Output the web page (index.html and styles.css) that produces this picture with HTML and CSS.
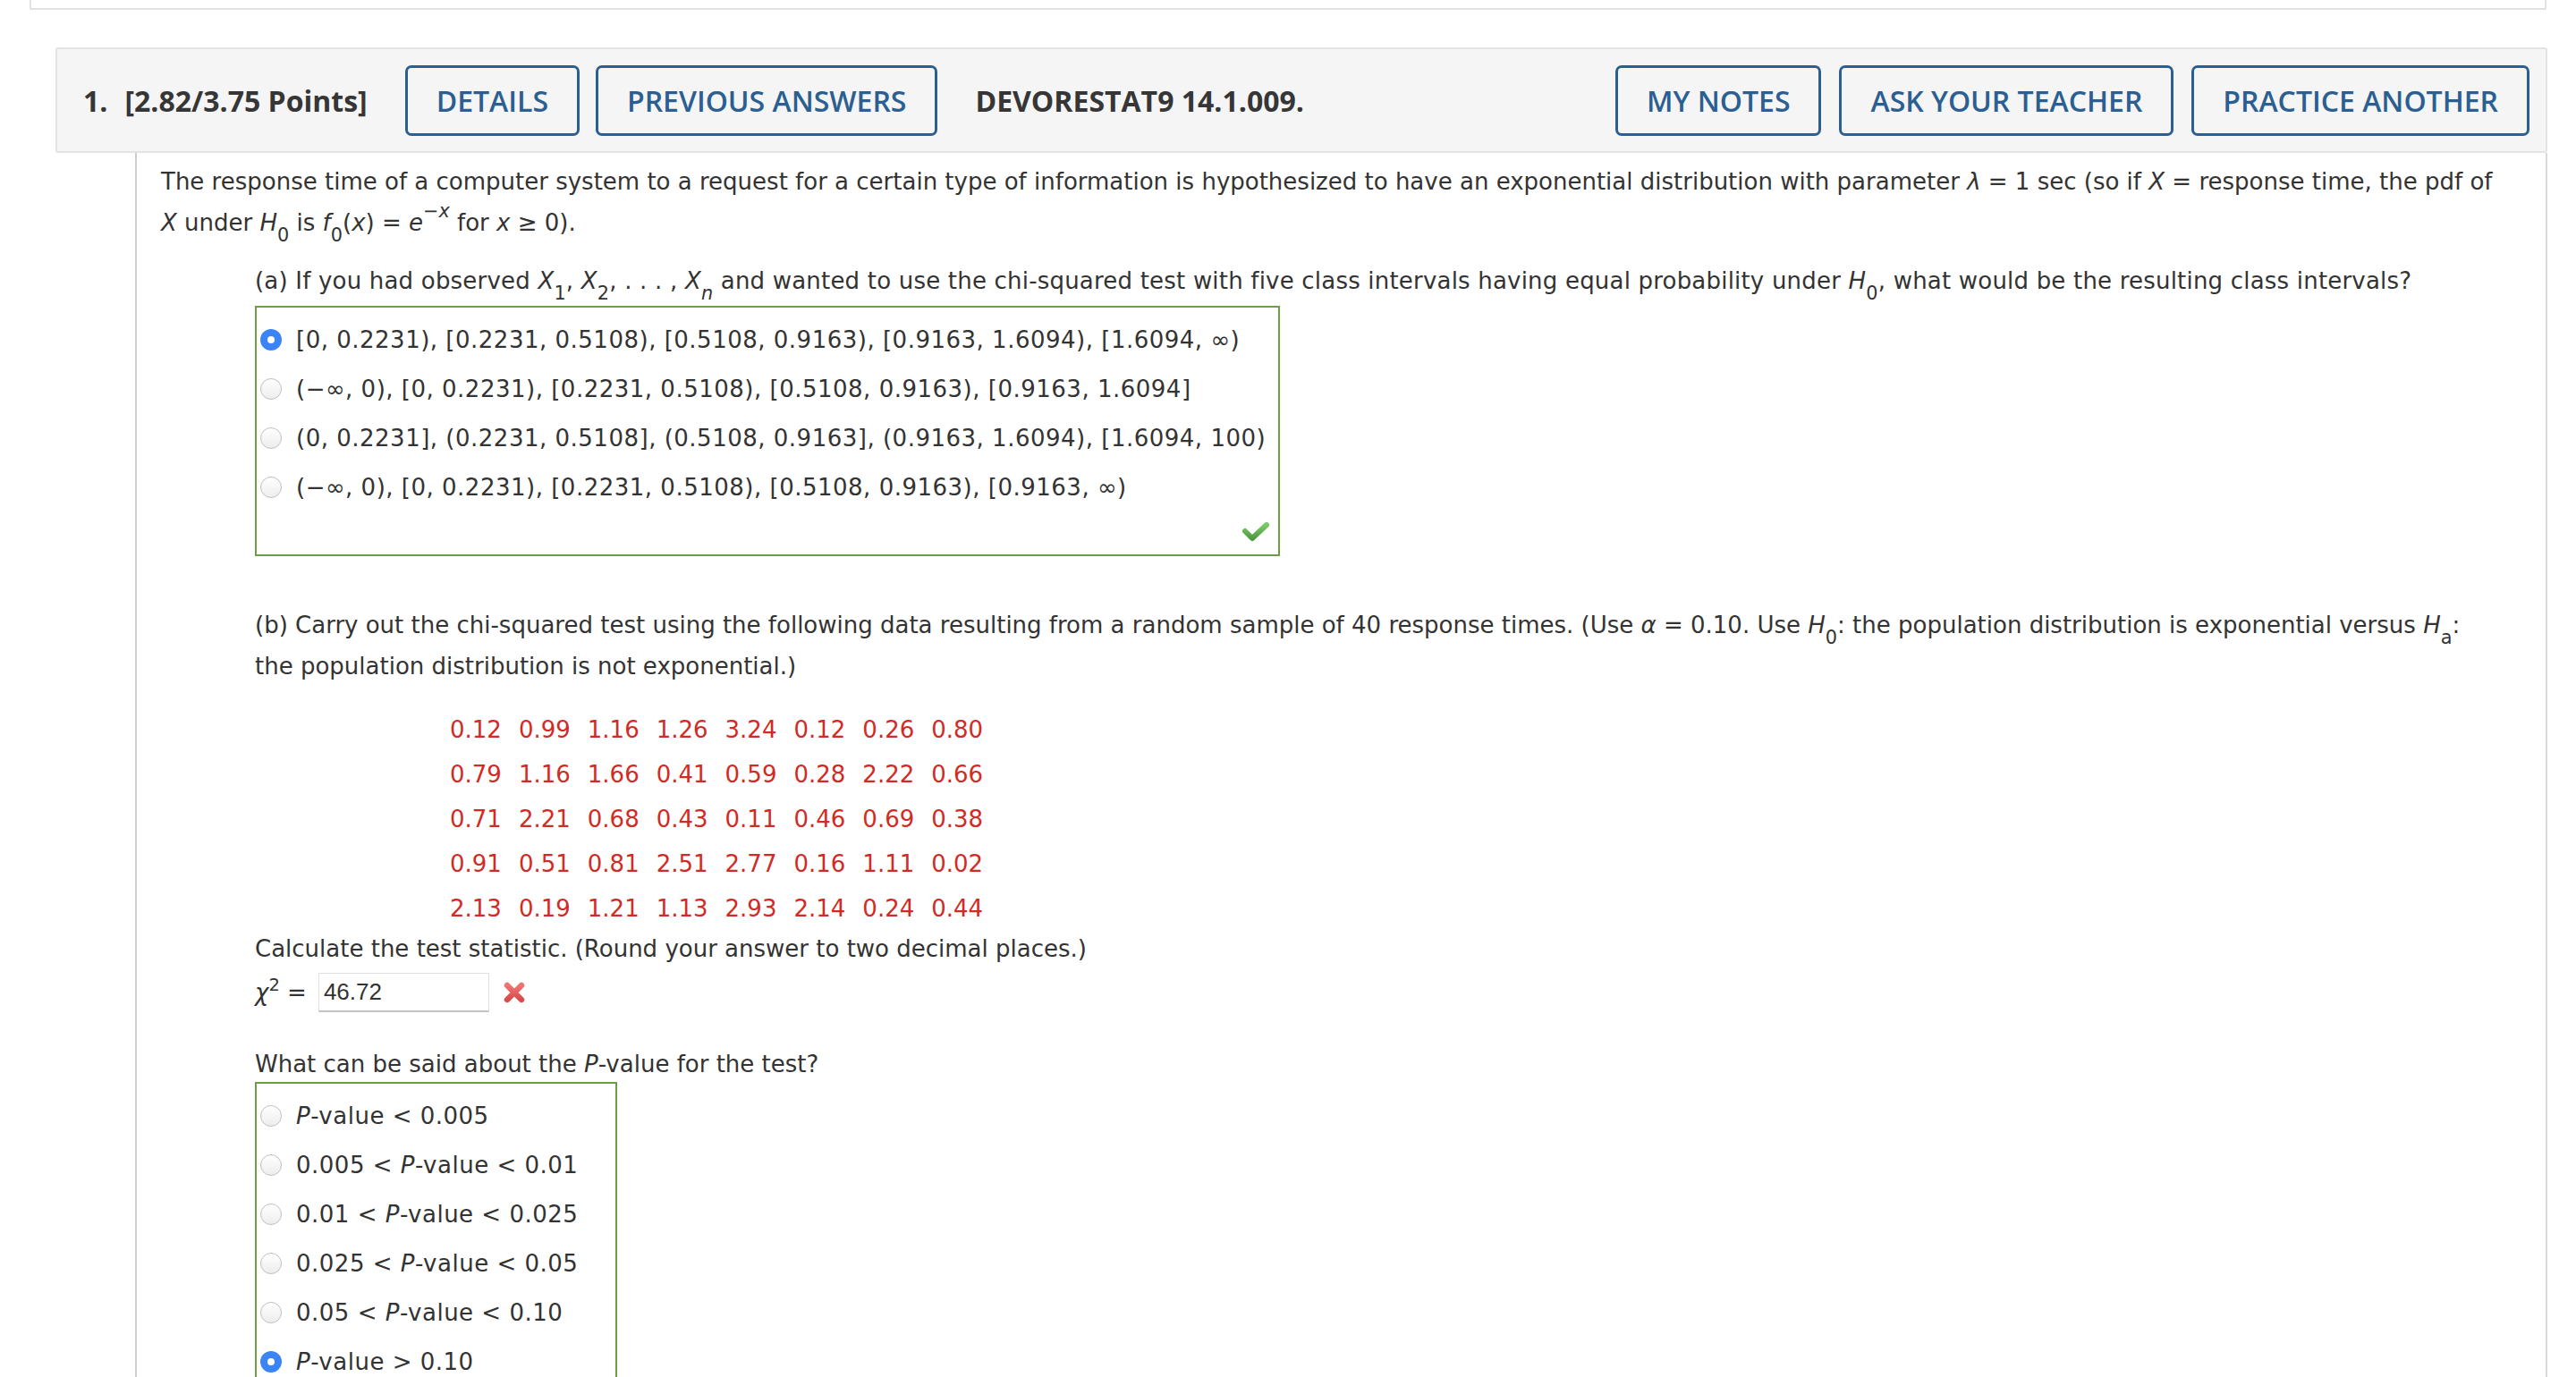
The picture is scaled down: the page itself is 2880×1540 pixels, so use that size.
FILE: index.html
```html
<!DOCTYPE html>
<html lang="en">
<head>
    <meta charset="UTF-8">
    <title>DEVORESTAT9 14.1.009</title>
    <link rel="stylesheet" href="styles.css">
</head>
<body>
    <div class="top-panel"></div>

    <div class="question">
        <div class="q-header">
            <span class="q-num">1.</span>
            <span class="q-points">[2.82/3.75 Points]</span>
            <div class="q-actions q-actions-left">
                <button class="btn">DETAILS</button>
                <button class="btn">PREVIOUS ANSWERS</button>
            </div>
            <span class="q-code">DEVORESTAT9 14.1.009.</span>
            <div class="q-actions q-actions-right">
                <button class="btn">MY NOTES</button>
                <button class="btn">ASK YOUR TEACHER</button>
                <button class="btn">PRACTICE ANOTHER</button>
            </div>
        </div>

        <div class="q-body">
            <p class="intro">
                The response time of a computer system to a request for a certain type of information is hypothesized to have an exponential distribution with parameter <i>λ</i> = 1 sec (so if <i>X</i> = response time, the pdf of <i>X</i> under <i>H</i><span class="sub">0</span> is <i>f</i><span class="sub">0</span>(<i>x</i>) = <i>e</i><span class="sup">−<i>x</i></span> for <i>x</i> ≥ 0).
            </p>

            <div class="part">
                <p class="prompt prompt-a">(a) If you had observed <i>X</i><span class="sub">1</span>, <i>X</i><span class="sub">2</span>, . . . , <i>X</i><span class="sub"><i>n</i></span> and wanted to use the chi-squared test with five class intervals having equal probability under <i>H</i><span class="sub">0</span>, what would be the resulting class intervals?</p>

                <div class="choices choices-a">
                    <div class="choice"><span class="radio checked"></span><span>[0, 0.2231), [0.2231, 0.5108), [0.5108, 0.9163), [0.9163, 1.6094), [1.6094, ∞)</span></div>
                    <div class="choice"><span class="radio"></span><span>(−∞, 0), [0, 0.2231), [0.2231, 0.5108), [0.5108, 0.9163), [0.9163, 1.6094]</span></div>
                    <div class="choice"><span class="radio"></span><span>(0, 0.2231], (0.2231, 0.5108], (0.5108, 0.9163], (0.9163, 1.6094), [1.6094, 100)</span></div>
                    <div class="choice"><span class="radio"></span><span>(−∞, 0), [0, 0.2231), [0.2231, 0.5108), [0.5108, 0.9163), [0.9163, ∞)</span></div>
                    <div class="feedback">
                        <svg class="icon-check" width="30" height="24" viewBox="0 0 30 24">
                            <defs>
                                <linearGradient id="checkGrad" x1="0" y1="0" x2="0" y2="1">
                                    <stop offset="0" stop-color="#7ccb6a"/>
                                    <stop offset="1" stop-color="#4f9a40"/>
                                </linearGradient>
                            </defs>
                            <path d="M3 11 L11 19 L27 4" fill="none" stroke="url(#checkGrad)" stroke-width="6" stroke-linecap="round" stroke-linejoin="round"/>
                        </svg>
                    </div>
                </div>
            </div>

            <div class="part part-b">
                <p class="prompt prompt-b">(b) Carry out the chi-squared test using the following data resulting from a random sample of 40 response times. (Use <i>α</i> = 0.10. Use <i>H</i><span class="sub">0</span>: the population distribution is exponential versus <i>H</i><span class="sub">a</span>: the population distribution is not exponential.)</p>

                <table class="data-table">
                    <tr><td>0.12</td><td>0.99</td><td>1.16</td><td>1.26</td><td>3.24</td><td>0.12</td><td>0.26</td><td>0.80</td></tr>
                    <tr><td>0.79</td><td>1.16</td><td>1.66</td><td>0.41</td><td>0.59</td><td>0.28</td><td>2.22</td><td>0.66</td></tr>
                    <tr><td>0.71</td><td>2.21</td><td>0.68</td><td>0.43</td><td>0.11</td><td>0.46</td><td>0.69</td><td>0.38</td></tr>
                    <tr><td>0.91</td><td>0.51</td><td>0.81</td><td>2.51</td><td>2.77</td><td>0.16</td><td>1.11</td><td>0.02</td></tr>
                    <tr><td>2.13</td><td>0.19</td><td>1.21</td><td>1.13</td><td>2.93</td><td>2.14</td><td>0.24</td><td>0.44</td></tr>
                </table>

                <p class="prompt">Calculate the test statistic. (Round your answer to two decimal places.)</p>
                <div class="answer-row">
                    <span class="answer-label"><i>χ</i><span class="sup-small">2</span> = </span>
                    <input class="answer-input" type="text" value="46.72">
                    <svg class="icon-wrong" width="26" height="24" viewBox="0 0 26 24">
                        <defs>
                            <linearGradient id="wrongGrad" x1="0" y1="0" x2="0" y2="1">
                                <stop offset="0" stop-color="#f07373"/>
                                <stop offset="1" stop-color="#d94a4a"/>
                            </linearGradient>
                        </defs>
                        <path d="M5 4 L21 20 M21 4 L5 20" stroke="url(#wrongGrad)" stroke-width="6.5" stroke-linecap="round"/>
                    </svg>
                </div>

                <p class="prompt prompt-pvalue">What can be said about the <i>P</i>-value for the test?</p>
                <div class="choices choices-b">
                    <div class="choice"><span class="radio"></span><span><i>P</i>-value &lt; 0.005</span></div>
                    <div class="choice"><span class="radio"></span><span>0.005 &lt; <i>P</i>-value &lt; 0.01</span></div>
                    <div class="choice"><span class="radio"></span><span>0.01 &lt; <i>P</i>-value &lt; 0.025</span></div>
                    <div class="choice"><span class="radio"></span><span>0.025 &lt; <i>P</i>-value &lt; 0.05</span></div>
                    <div class="choice"><span class="radio"></span><span>0.05 &lt; <i>P</i>-value &lt; 0.10</span></div>
                    <div class="choice"><span class="radio checked"></span><span><i>P</i>-value &gt; 0.10</span></div>
                </div>
            </div>
        </div>
    </div>
</body>
</html>
```

FILE: styles.css
```css
body {
    margin: 0;
    background: #fff;
    color: #333;
    font-family: 'DejaVu Sans', Verdana, sans-serif;
    font-size: 26px;
}
.top-panel {
    height: 9px;
    margin: 0 33px;
    border: 2px solid #e2e2e2;
    border-top: none;
}
.question {
    margin: 42px 32px 0 62px;
}
.q-header {
    display: flex;
    align-items: center;
    height: 114px;
    padding: 0 18px 0 29px;
    background: #f5f5f5;
    border: 2px solid #e3e3e3;
    border-radius: 3px;
    font-family: 'Open Sans', sans-serif;
    font-weight: 700;
    font-size: 32px;
    color: #363636;
}
.q-points {
    margin-left: 19px;
}
.q-actions {
    display: flex;
    gap: 18px;
}
.q-actions-left {
    margin: 0 42px;
}
.q-actions-right {
    margin-left: auto;
    gap: 20px;
}
.btn {
    height: 79px;
    padding: 0 32px;
    background: transparent;
    border: 3px solid #2c5f91;
    border-radius: 7px;
    color: #2c5f91;
    font-family: 'Open Sans', sans-serif;
    font-weight: 600;
    font-size: 32px;
    cursor: pointer;
}
.q-body {
    margin-left: 89px;
    padding: 9px 49px 60px 27px;
    border-left: 2px solid #cdcdcd;
    border-right: 2px solid #d8d8d8;
}
.q-body p {
    margin: 0;
}
.intro {
    line-height: 46px;
}
.sub {
    font-size: 0.8em;
    line-height: 0;
    vertical-align: -12px;
}
.sup {
    font-size: 0.8em;
    line-height: 0;
    vertical-align: 15px;
}
.sup-small {
    font-size: 0.75em;
    line-height: 0;
    vertical-align: 11px;
}
.part {
    margin-left: 105px;
}
.prompt {
    line-height: 40px;
}
.prompt-a {
    margin-top: 22px !important;
    letter-spacing: 0.2px;
}
.choices {
    box-sizing: border-box;
    margin-top: 8px;
    padding: 8px 0 0 4px;
    border: 2px solid #6b9e45;
    letter-spacing: 0.5px;
}
.choices-a {
    width: 1146px;
}
.choices-b {
    width: 405px;
    margin-top: 0;
}
.choice {
    display: flex;
    align-items: center;
    height: 55px;
    white-space: nowrap;
}
.radio {
    position: relative;
    flex: none;
    box-sizing: border-box;
    width: 24px;
    height: 24px;
    margin-right: 16px;
    border: 1px solid #bfbfbf;
    border-radius: 50%;
    background: linear-gradient(#ffffff, #ededed);
}
.radio.checked {
    border: none;
    background: #3a84f6;
}
.radio.checked::after {
    content: '';
    position: absolute;
    left: 8px;
    top: 8px;
    width: 8px;
    height: 8px;
    border-radius: 50%;
    background: #fff;
}
.feedback {
    display: flex;
    justify-content: flex-end;
    height: 48px;
    padding: 11px 10px 0 0;
    box-sizing: border-box;
}
.part-b {
    margin-top: 54px;
}
.prompt-b {
    line-height: 46px !important;
}
.data-table {
    margin: 23px 0 0 208px;
    border-collapse: collapse;
    color: #d02b25;
}
.data-table td {
    padding: 0 9px 0 10px;
    line-height: 50px;
}
.answer-row {
    display: flex;
    align-items: center;
    height: 44px;
    margin-top: 7px;
}
.answer-label {
    margin-right: 13px;
}
.answer-input {
    box-sizing: border-box;
    width: 191px;
    height: 44px;
    padding: 0 5px;
    border: 1px solid #e0e0e0;
    border-bottom: 2px solid #c4c4c4;
    font-family: 'Liberation Sans', Arial, sans-serif;
    font-size: 26px;
    color: #333;
}
.icon-wrong {
    margin-left: 15px;
}
.prompt-pvalue {
    margin-top: 38px !important;
}
```
